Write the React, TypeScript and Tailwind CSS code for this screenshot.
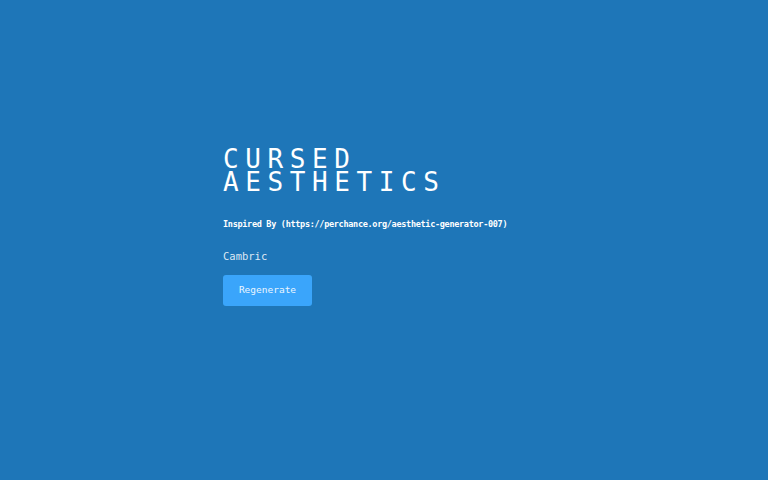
export default function App() {
  return (
    <div
      className="w-[768px] h-[480px] bg-[#1e76b8] text-white flex"
      style={{ fontFamily: '"DejaVu Sans Mono", "Liberation Mono", monospace' }}
    >
      <div className="pl-[223px] pt-[148px] flex flex-col">
        <h1 className="text-[26px] leading-[23px] tracking-[6.6px] font-normal">
          <span className="block">CURSED</span>
          <span className="block">AESTHETICS</span>
        </h1>
        <p className="mt-[24px] text-[8.5px] leading-[12px] tracking-[-0.3px] font-bold whitespace-nowrap">
          Inspired By (https://perchance.org/aesthetic-generator-007)
        </p>
        <p className="mt-[19px] text-[10.5px] leading-[14px] text-[#dce8f4]">Cambric</p>
        <button className="mt-[12px] w-[89px] h-[31px] rounded-[3px] bg-[#3aa5fb] text-[9.5px] text-[#eaf5ff]">
          Regenerate
        </button>
      </div>
    </div>
  );
}
